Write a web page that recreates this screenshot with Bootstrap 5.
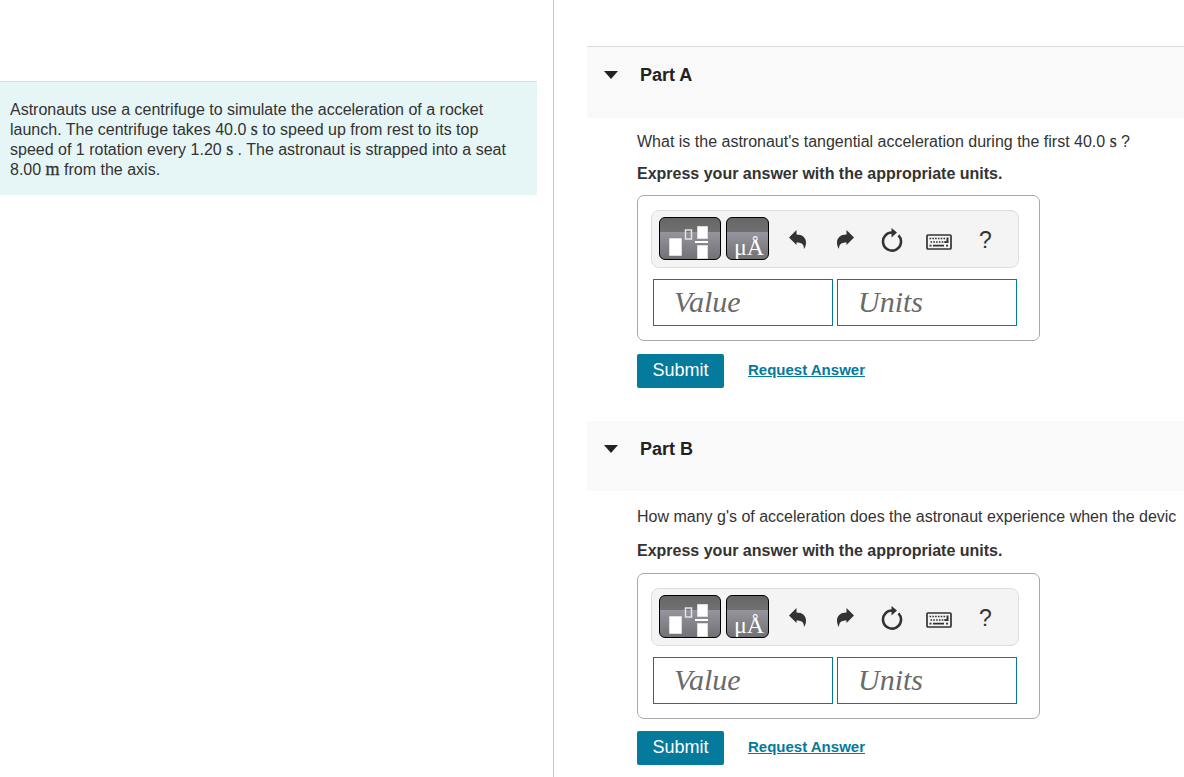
<!DOCTYPE html>
<html lang="en">
<head>
<meta charset="utf-8">
<meta name="viewport" content="width=device-width, initial-scale=1">
<title>Centrifuge acceleration</title>
<link href="https://cdn.jsdelivr.net/npm/bootstrap@5.3.0/dist/css/bootstrap.min.css" rel="stylesheet">
<style>
body{font-family:"Liberation Sans",Arial,sans-serif;font-size:16px;line-height:20px;color:#333;background:#fff}
.problem-pane{width:calc(50% - 38px);padding-top:81px;padding-right:16px;border-right:1px solid #c3c7d0}
.problem-text{background:#e6f6f6;border-top:1px solid #d6dfdf;padding:18px 18px 15px 10px}
.unit{font-family:"Liberation Serif","Times New Roman",serif;font-size:18px;line-height:16px;-webkit-text-stroke:.3px #333}
.work-pane{min-width:0;overflow:hidden;padding-top:46px;padding-left:33px}
.part-head{background:#f9f9f9;height:70px;padding:18px 17px}
.part-first .part-head{height:72px;border-top:1px solid #d9dbdd}
.part-head button{gap:22px;border:0;background:none;padding:0;color:#222;font-size:18px;font-weight:700;line-height:20px}
.part-body{padding:16px 0 33px 50px}
.part-first .part-body{padding-top:14px}
.question{margin-bottom:14px}
.part-first .question{margin-bottom:12px}
.hint{margin-bottom:12px}
.part-first .hint{margin-bottom:11px}
.answer-box{max-width:403px;padding:14px 14px 14px 13px;border:1px solid #a9a9a9;border-radius:7px;margin-bottom:12px}
.part-first .answer-box{margin-bottom:13px}
.tools{max-width:368px;height:58px;padding:0 7px;background:#f4f4f4;border:1px solid #ddd;border-radius:8px;margin-bottom:11px}
.tool-dark{height:43px;padding:0;margin:0 5px 2px 0;border:1px solid #000;border-radius:6px;background:linear-gradient(#666 0,#707070 33%,#96959d 34%,#717176 100%)}
.tool-dark svg,.tool-plain svg{display:block}
.tool-plain{width:47px;height:43px;border:0;background:none;padding:2px 0 0;color:#333}
.tool-keys{padding-top:6px}
.tool-help{font-size:23px}
.fields{gap:4px;padding:0 8px 0 2px}
.fields input{height:47px;padding:0 20px 2px;border:1px solid #047a9c;border-radius:0;font-family:"Liberation Serif","Times New Roman",serif;font-style:italic;font-size:30px;line-height:36px;min-width:0}
.fields input::placeholder{color:#6a6a6a;opacity:1}
.submit-btn{width:87px;height:34px;padding:0 0 2px;border:0;border-radius:2px;background:#047a9c;color:#fff;font-size:18px;line-height:20px}
.submit-btn:hover{background:#036984;color:#fff}
.request-link{font-size:15px;font-weight:700;line-height:20px;color:#047a9c;margin-left:24px;margin-bottom:2px}
</style>
</head>
<body>
<svg class="d-none" xmlns="http://www.w3.org/2000/svg">
  <symbol id="templates" viewBox="0 0 60 41">
    <path fill="#fff" stroke="#ddd" d="M9.500 20.500h12v17h-12zM37.500 8.500h10v12h-10zM37.500 27.500h10v13h-10z"/>
    <path fill="none" stroke="#e4e4e4" stroke-width="1.500" d="M25.500 12h6v9h-6z"/>
    <path fill="#fff" d="M35 23h13v2H35z"/>
  </symbol>
  <symbol id="undo" viewBox="0 0 18 20">
    <path fill="currentColor" d="M0 7.500 7.500 0v4.500C13.500 4.500 17 8 17 12.500c0 2.300-.5 4.300-2 6.500 0-4.500-2-6.500-7.500-6.500V15z"/>
  </symbol>
  <symbol id="redo" viewBox="0 0 18 20">
    <path fill="currentColor" d="M18 7.500 10.500 0v4.500C4.500 4.500 1 8 1 12.500c0 2.300.5 4.300 2 6.500 0-4.500 2-6.500 7.500-6.500V15z"/>
  </symbol>
  <symbol id="reset" viewBox="0 0 22 25">
    <path fill="none" stroke="currentColor" stroke-width="2.600" d="M12 4.600A9 9 0 1 0 17.500 7.300"/>
    <path fill="currentColor" d="m10.500 0 5.500 4.500-5.500 5z"/>
  </symbol>
  <symbol id="keyboard" viewBox="0 0 26 16">
    <rect x="1" y="1" width="24" height="14" rx="1" fill="none" stroke="currentColor" stroke-width="1.700"/>
    <path fill="none" stroke="currentColor" stroke-width="1.600" stroke-dasharray="1.600 1.200" d="M3.500 4.500H20M4.500 8H20"/>
    <path fill="currentColor" d="M20.500 3.500h2V9h-4V7.200h2zM3.500 10.800h2v1.700h-2zM7 10.800h11v1.700H7zM20 10.800h2v1.700h-2z"/>
  </symbol>
</svg>
<div class="d-flex min-vh-100">
  <aside class="problem-pane flex-shrink-0">
    <p class="problem-text mb-0">Astronauts use a centrifuge to simulate the acceleration of a rocket launch. The centrifuge takes 40.0 <span class="unit">s</span> to speed up from rest to its top speed of 1 rotation every 1.20 <span class="unit">s</span> . The astronaut is strapped into a seat 8.00 <span class="unit">m</span> from the axis.</p>
  </aside>
  <main class="work-pane flex-grow-1">
    <section class="part-first">
      <h2 class="part-head mb-0 d-flex align-items-start"><button type="button" class="d-flex align-items-center" aria-expanded="true"><svg width="14" height="8" aria-hidden="true"><path fill="#222" d="M0 0h14L7 8z"/></svg>Part A</button></h2>
      <form class="part-body">
        <p class="question text-nowrap">What is the astronaut's tangential acceleration during the first 40.0 <span class="unit">s</span> ?</p>
        <p class="hint fw-bold">Express your answer with the appropriate units.</p>
        <div class="answer-box">
          <div class="tools d-flex align-items-center">
            <button type="button" class="tool-dark" aria-label="Templates"><svg width="60" height="41"><use href="#templates"/></svg></button>
            <button type="button" class="tool-dark" aria-label="Symbols"><svg width="41" height="41"><text x="7" y="37" font-family="Liberation Serif" font-size="24" fill="#fff">μÅ</text></svg></button>
            <button type="button" class="tool-plain d-flex align-items-center justify-content-center" aria-label="Undo"><svg width="18" height="20"><use href="#undo"/></svg></button>
            <button type="button" class="tool-plain d-flex align-items-center justify-content-center" aria-label="Redo"><svg width="18" height="20"><use href="#redo"/></svg></button>
            <button type="button" class="tool-plain d-flex align-items-center justify-content-center" aria-label="Reset"><svg width="22" height="25"><use href="#reset"/></svg></button>
            <button type="button" class="tool-plain tool-keys d-flex align-items-center justify-content-center" aria-label="Keyboard shortcuts"><svg width="26" height="16"><use href="#keyboard"/></svg></button>
            <button type="button" class="tool-plain tool-help" aria-label="Help">?</button>
          </div>
          <div class="fields d-flex">
            <input class="form-control" type="text" placeholder="Value" aria-label="Value">
            <input class="form-control" type="text" placeholder="Units" aria-label="Units">
          </div>
        </div>
        <div class="d-flex align-items-center">
          <button type="submit" class="btn submit-btn">Submit</button>
          <a href="#" class="request-link">Request Answer</a>
        </div>
      </form>
    </section>
    <section>
      <h2 class="part-head mb-0 d-flex align-items-start"><button type="button" class="d-flex align-items-center" aria-expanded="true"><svg width="14" height="8" aria-hidden="true"><path fill="#222" d="M0 0h14L7 8z"/></svg>Part B</button></h2>
      <form class="part-body pb-0">
        <p class="question text-nowrap">How many g's of acceleration does the astronaut experience when the devic</p>
        <p class="hint fw-bold">Express your answer with the appropriate units.</p>
        <div class="answer-box">
          <div class="tools d-flex align-items-center">
            <button type="button" class="tool-dark" aria-label="Templates"><svg width="60" height="41"><use href="#templates"/></svg></button>
            <button type="button" class="tool-dark" aria-label="Symbols"><svg width="41" height="41"><text x="7" y="37" font-family="Liberation Serif" font-size="24" fill="#fff">μÅ</text></svg></button>
            <button type="button" class="tool-plain d-flex align-items-center justify-content-center" aria-label="Undo"><svg width="18" height="20"><use href="#undo"/></svg></button>
            <button type="button" class="tool-plain d-flex align-items-center justify-content-center" aria-label="Redo"><svg width="18" height="20"><use href="#redo"/></svg></button>
            <button type="button" class="tool-plain d-flex align-items-center justify-content-center" aria-label="Reset"><svg width="22" height="25"><use href="#reset"/></svg></button>
            <button type="button" class="tool-plain tool-keys d-flex align-items-center justify-content-center" aria-label="Keyboard shortcuts"><svg width="26" height="16"><use href="#keyboard"/></svg></button>
            <button type="button" class="tool-plain tool-help" aria-label="Help">?</button>
          </div>
          <div class="fields d-flex">
            <input class="form-control" type="text" placeholder="Value" aria-label="Value">
            <input class="form-control" type="text" placeholder="Units" aria-label="Units">
          </div>
        </div>
        <div class="d-flex align-items-center">
          <button type="submit" class="btn submit-btn">Submit</button>
          <a href="#" class="request-link">Request Answer</a>
        </div>
      </form>
    </section>
  </main>
</div>
<script src="https://cdn.jsdelivr.net/npm/bootstrap@5.3.0/dist/js/bootstrap.bundle.min.js"></script>
</body>
</html>
